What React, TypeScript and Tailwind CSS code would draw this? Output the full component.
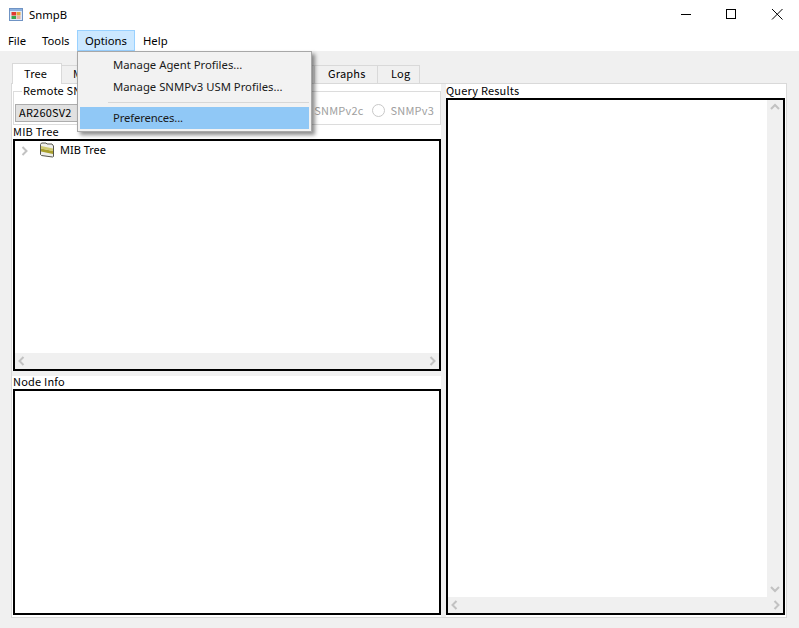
const ui = "font-['Noto_Sans',sans-serif]";
const jp = "font-['Noto_Sans_CJK_JP','Noto_Sans',sans-serif] text-[11px] tracking-[0.2px] leading-[13px] text-black whitespace-nowrap";

function Chevron({ dir, className }: { dir: "up" | "down" | "left" | "right"; className?: string }) {
  const points = {
    up: "1,6 5,2 9,6",
    down: "1,3 5,7 9,3",
    left: "6.5,1 2.5,5 6.5,9",
    right: "3.5,1 7.5,5 3.5,9",
  }[dir];
  return (
    <svg width="10" height="10" viewBox="0 0 10 10" className={className}>
      <polyline points={points} fill="none" stroke="#c2c2c2" strokeWidth="2" />
    </svg>
  );
}

function AppIcon() {
  return (
    <svg width="14" height="14" viewBox="0 0 14 14">
      <rect x="0.5" y="0.5" width="13" height="12" fill="#dfe9f6" stroke="#6f93c4" />
      <rect x="1" y="1" width="12" height="2" fill="#8fb2de" />
      <rect x="2.5" y="4" width="4.5" height="3.5" fill="#e23b2e" />
      <rect x="7.5" y="4" width="4" height="3.5" fill="#e8a33a" />
      <rect x="2.5" y="8" width="4.5" height="3" fill="#3aa84a" />
      <rect x="7.5" y="8" width="4" height="3" fill="#e8b0a0" />
    </svg>
  );
}

function FolderIcon() {
  return (
    <svg width="16" height="16" viewBox="0 0 16 16">
      <path d="M1.5 2.5 L2.5 1 H7 L8 2 H13 L14.5 4 V14.5 L13.5 15 L2.5 13.5 L1.5 12.5 Z" fill="#eeeeea" stroke="#55554d" />
      <path d="M2 6.5 L14 9 V12 L2 9.5 Z" fill="#a89f2c" />
      <path d="M2 4 L14 6.5 V9 L2 6.5 Z" fill="#cfc96f" />
    </svg>
  );
}

function Tab({ label, className, active }: { label?: string; className: string; active?: boolean }) {
  return (
    <div
      className={`${className} ${jp} flex items-center pb-[2px] border border-b-0 border-[#d9d9d9] -ml-px first:ml-0 ${
        active ? "bg-white h-[21px] -mb-px relative z-10" : "bg-[#f0f0f0] h-[18px] mt-[2px]"
      }`}
    >
      {label}
    </div>
  );
}

function Radio({ label }: { label: string }) {
  return (
    <div className="flex items-center gap-[6px]">
      <span className="w-[13px] h-[13px] rounded-full border border-[#c8c8c8] bg-white" />
      <span className={`${jp} !text-[#a0a0a0]`}>{label}</span>
    </div>
  );
}

function HScroll() {
  return (
    <div className="h-[16px] shrink-0 bg-[#f0f0f0] flex items-center justify-between px-[2px]">
      <Chevron dir="left" />
      <Chevron dir="right" />
    </div>
  );
}

export default function App() {
  return (
    <div className={`${ui} relative w-[799px] h-[628px] bg-[#f0f0f0] overflow-hidden flex flex-col`}>
      {/* Title bar */}
      <div className="h-[30px] shrink-0 bg-white flex items-center">
        <div className="ml-[9px] mr-[6px] flex"><AppIcon /></div>
        <span className="text-[11.3px] text-black">SnmpB</span>
        <div className="ml-auto flex items-center">
          <svg width="46" height="30" viewBox="0 0 46 30"><line x1="20" y1="14.5" x2="30" y2="14.5" stroke="#000" /></svg>
          <svg width="46" height="30" viewBox="0 0 46 30"><rect x="19.5" y="9.5" width="9" height="9" fill="none" stroke="#000" /></svg>
          <svg width="46" height="30" viewBox="0 0 46 30"><path d="M19 9 L29.5 19.5 M29.5 9 L19 19.5" stroke="#000" fill="none" /></svg>
        </div>
      </div>

      {/* Menu bar */}
      <div className="h-[21px] shrink-0 bg-white flex text-[11.3px] text-black">
        <div className="w-[34px] pl-[8px] leading-[22px]">File</div>
        <div className="w-[43px] pl-[8px] leading-[22px]">Tools</div>
        <div className="w-[58px] pl-[7px] leading-[20px] bg-[#cce8ff] border border-[#99d1ff]">Options</div>
        <div className="pl-[8px] leading-[22px]">Help</div>
      </div>

      {/* Tabs */}
      <div className="h-[32px] shrink-0 pl-[12px] pt-[12px] flex items-end">
        <Tab label="Tree" className="w-[50px] pl-[11px]" active />
        <Tab label="M" className="w-[84px] pl-[11px]" />
        <Tab className="w-[84px]" />
        <Tab className="w-[88px]" />
        <Tab label="Graphs" className="w-[64px] pl-[13px]" />
        <Tab label="Log" className="w-[43px] pl-[13px]" />
      </div>

      {/* Pane */}
      <div className="ml-[11px] w-[776px] h-[535px] shrink-0 bg-white border border-[#d9d9d9] flex">
        <div className="w-[429px] shrink-0 flex flex-col pl-px">
          {/* Group box */}
          <div className="relative mt-[7px] h-[34px] shrink-0 border border-[#dcdcdc] flex items-center justify-end pr-[6px]">
            <span className={`${jp} absolute left-[8px] -top-[8px] bg-white px-[1px]`}>Remote SN</span>
            <div className="absolute left-[1px] top-[12px] w-[120px] h-[18px] bg-[#e1e1e1] border border-[#adadad] pl-[3px] pb-[2px] flex items-center">
              <span className={jp}>AR260SV2</span>
            </div>
            <div className="flex items-center gap-[8px] mt-[4px]">
              <span className={`${jp} !text-[#a0a0a0]`}>SNMPv2c</span>
              <Radio label="SNMPv3" />
            </div>
          </div>
          <div className={`${jp} h-[14px] shrink-0`}>MIB Tree</div>
          <div className="h-[232px] shrink-0 border-2 border-black flex flex-col">
            <div className="flex-1 flex items-start pt-[1px]">
              <div className="flex items-center h-[16px]">
                <Chevron dir="right" className="ml-[4px] mt-[2px]" />
                <span className="ml-[10px] flex"><FolderIcon /></span>
                <span className="ml-[5px] text-[11px] text-black leading-[16px]">MIB Tree</span>
              </div>
            </div>
            <HScroll />
          </div>
          <div className="h-[5px] shrink-0 bg-[#f0f0f0] -ml-px" />
          <div className={`${jp} h-[13px] shrink-0 -mt-px pb-px box-content`}>Node Info</div>
          <div className="h-[226px] shrink-0 border-2 border-black" />
        </div>

        <div className="w-[5px] shrink-0 bg-[#f0f0f0]" />

        <div className="flex-1 flex flex-col">
          <div className={`${jp} h-[14px] shrink-0`}>Query Results</div>
          <div className="h-[517px] w-[339px] shrink-0 border-2 border-black flex flex-col">
            <div className="flex-1 flex min-h-0">
              <div className="flex-1" />
              <div className="w-[16px] bg-[#f0f0f0] flex flex-col items-center justify-between py-[3px]">
                <Chevron dir="up" />
                <Chevron dir="down" />
              </div>
            </div>
            <HScroll />
          </div>
        </div>
      </div>

      {/* Dropdown menu */}
      <div className="absolute left-[77px] top-[51px] w-[235px] h-[81px] bg-[#f2f2f2] border border-[#a8a8a8] shadow-[3px_3px_4px_rgba(0,0,0,0.45)] text-[11.3px] text-[#1a1a1a] flex flex-col">
        <div className="h-[22px] mt-[2px] pl-[35px] leading-[22px]">Manage Agent Profiles...</div>
        <div className="h-[22px] pl-[35px] leading-[22px]">Manage SNMPv3 USM Profiles...</div>
        <div className="h-px mt-[4px] ml-[30px] mr-[2px] bg-[#d7d7d7]" />
        <div className="h-[22px] mt-[4px] mx-[2px] pl-[33px] leading-[22px] bg-[#90c8f6] tracking-[-0.15px]">Preferences...</div>
      </div>
    </div>
  );
}
